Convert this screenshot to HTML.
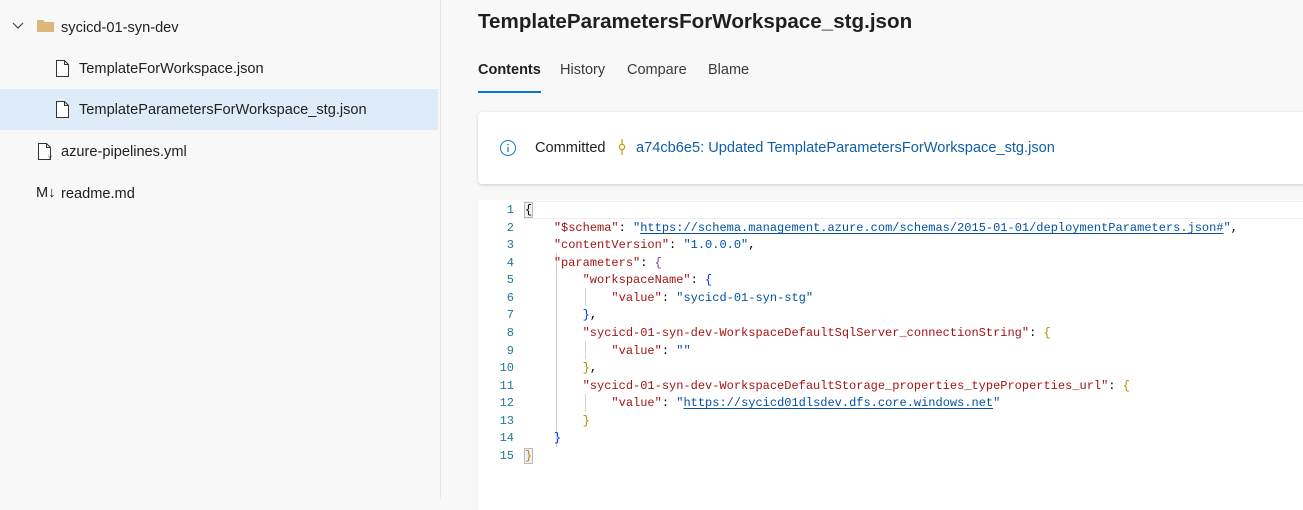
<!DOCTYPE html>
<html><head><meta charset="utf-8"><style>
*{margin:0;padding:0;box-sizing:border-box}
body{width:1303px;height:499px;overflow:hidden;background:#f8f8f8;font-family:"Liberation Sans",sans-serif;color:#201f1e;position:relative}
.side{position:absolute;left:0;top:0;width:441px;height:499px;border-right:1px solid #e6e6e6;background:#f8f8f8}
.row{position:absolute;left:0;width:438px;height:41px;font-size:14.6px;display:flex;align-items:center}
.sel{background:#deecf9}
.t{position:absolute;font-size:14.6px}
.title{position:absolute;left:478px;top:10px;font-size:20.6px;font-weight:600;color:#201f1e}
.tab{position:absolute;top:62px;font-size:14.5px;color:#3b3a39}
.card{position:absolute;left:478px;top:112px;width:840px;height:72px;background:#fff;border-radius:4px;box-shadow:0 1px 3px rgba(0,0,0,.18)}
.code{position:absolute;left:478px;top:200px;width:840px;height:310px;background:#fff}
.ln{position:absolute;left:0;width:36px;text-align:right;font:12px "Liberation Mono",monospace;color:#237893}
.cl{position:absolute;left:47px;font:12px "Liberation Mono",monospace;white-space:pre;color:#000}
.k{color:#a31515}.s{color:#0451a5}.u{color:#0451a5;text-decoration:underline;text-underline-offset:2px}
.b1{color:#af8c00}.b2{color:#7a3e9d}.b3{color:#0431fa}
.g{position:absolute;width:1px;background:#d3d3d3}
</style></head><body>
<div class="side">
 <div class="row" style="top:7px">
  <svg style="position:absolute;left:12px;top:15px" width="12" height="8"><path d="M1 1l5 5 5-5" fill="none" stroke="#444" stroke-width="1.2"/></svg>
  <svg style="position:absolute;left:37px;top:12px" width="18" height="14"><path d="M0 1h6l2 2h9v10H0z" fill="#dcb67a"/></svg>
  <span class="t" style="left:61px;top:13px">sycicd-01-syn-dev</span></div>
 <div class="row" style="top:48px">
  <svg style="position:absolute;left:55px;top:11px" width="16" height="19"><path d="M1.5 1.5h8l4 4v12h-12z M9.5 1.5v4h4" fill="#fff" stroke="#333" stroke-width="1"/></svg>
  <span class="t" style="left:79px;top:13px">TemplateForWorkspace.json</span></div>
 <div class="row sel" style="top:89px">
  <svg style="position:absolute;left:55px;top:11px" width="16" height="19"><path d="M1.5 1.5h8l4 4v12h-12z M9.5 1.5v4h4" fill="#fff" stroke="#333" stroke-width="1"/></svg>
  <span class="t" style="left:79px;top:13px">TemplateParametersForWorkspace_stg.json</span></div>
 <div class="row" style="top:131px">
  <svg style="position:absolute;left:37px;top:11px" width="18" height="19"><path d="M1.5 1.5h8l4 4v12h-12z M9.5 1.5v4h4" fill="#fff" stroke="#333" stroke-width="1"/><text x="11" y="18" font-size="6" fill="#333">Y</text></svg>
  <span class="t" style="left:61px;top:13px">azure-pipelines.yml</span></div>
 <div class="row" style="top:173px">
  <span class="t" style="left:36px;top:12px">M↓</span>
  <span class="t" style="left:61px;top:13px">readme.md</span></div>
</div>
<div class="title">TemplateParametersForWorkspace_stg.json</div>
<div class="tab" style="left:478px;font-weight:600;color:#201f1e">Contents</div>
<div style="position:absolute;left:478px;top:91px;width:63px;height:2px;background:#0078d4"></div>
<div class="tab" style="left:560px">History</div>
<div class="tab" style="left:627px">Compare</div>
<div class="tab" style="left:708px">Blame</div>
<div class="card">
 <svg style="position:absolute;left:21px;top:27px" width="18" height="18"><circle cx="9" cy="9" r="7.5" fill="none" stroke="#0078d4" stroke-width="1"/><path d="M9 8v5" stroke="#0078d4" stroke-width="1.2"/><circle cx="9" cy="5.5" r=".8" fill="#0078d4"/></svg>
 <span style="position:absolute;left:57px;top:28px;font-size:14.6px">Committed</span>
 <svg style="position:absolute;left:140px;top:27px" width="8" height="16"><path d="M4 0v5M4 11v5" stroke="#c19c00" stroke-width="1.2"/><circle cx="4" cy="8" r="2.6" fill="none" stroke="#c19c00" stroke-width="1.2"/></svg>
 <span style="position:absolute;left:158px;top:28px;font-size:14.6px;color:#0f5fa6">a74cb6e5: Updated TemplateParametersForWorkspace_stg.json</span>
</div>
<div class="code">
 <div style="position:absolute;left:44px;top:1px;width:800px;height:18px;border-top:1px solid #eee;border-bottom:1px solid #eee"></div>
 <div class="g" style="left:78px;top:53px;height:194px"></div>
 <div class="g" style="left:107px;top:88px;height:18px"></div>
 <div class="g" style="left:107px;top:141px;height:18px"></div>
 <div class="g" style="left:107px;top:194px;height:18px"></div>
 <div class="ln" style="top:3px">1</div><div class="ln" style="top:21px">2</div><div class="ln" style="top:38px">3</div><div class="ln" style="top:56px">4</div><div class="ln" style="top:73px">5</div><div class="ln" style="top:91px">6</div><div class="ln" style="top:108px">7</div><div class="ln" style="top:126px">8</div><div class="ln" style="top:144px">9</div><div class="ln" style="top:161px">10</div><div class="ln" style="top:179px">11</div><div class="ln" style="top:196px">12</div><div class="ln" style="top:214px">13</div><div class="ln" style="top:231px">14</div><div class="ln" style="top:249px">15</div>
 <div class="cl" style="top:3px"><span style="outline:1px solid #bbb;background:#f0f0f0">{</span></div>
 <div class="cl" style="top:21px">    <span class="k">"$schema"</span>: <span class="s">"</span><span class="u">https://schema.management.azure.com/schemas/2015-01-01/deploymentParameters.json#</span><span class="s">"</span>,</div>
 <div class="cl" style="top:38px">    <span class="k">"contentVersion"</span>: <span class="s">"1.0.0.0"</span>,</div>
 <div class="cl" style="top:56px">    <span class="k">"parameters"</span>: <span class="b2">{</span></div>
 <div class="cl" style="top:73px">        <span class="k">"workspaceName"</span>: <span class="b3">{</span></div>
 <div class="cl" style="top:91px">            <span class="k">"value"</span>: <span class="s">"sycicd-01-syn-stg"</span></div>
 <div class="cl" style="top:108px">        <span class="b3">}</span>,</div>
 <div class="cl" style="top:126px">        <span class="k">"sycicd-01-syn-dev-WorkspaceDefaultSqlServer_connectionString"</span>: <span class="b1">{</span></div>
 <div class="cl" style="top:144px">            <span class="k">"value"</span>: <span class="s">""</span></div>
 <div class="cl" style="top:161px">        <span class="b1">}</span>,</div>
 <div class="cl" style="top:179px">        <span class="k">"sycicd-01-syn-dev-WorkspaceDefaultStorage_properties_typeProperties_url"</span>: <span class="b1">{</span></div>
 <div class="cl" style="top:196px">            <span class="k">"value"</span>: <span class="s">"</span><span class="u">https://sycicd01dlsdev.dfs.core.windows.net</span><span class="s">"</span></div>
 <div class="cl" style="top:214px">        <span class="b1">}</span></div>
 <div class="cl" style="top:231px">    <span class="b3">}</span></div>
 <div class="cl" style="top:249px"><span style="outline:1px solid #bbb;background:#f0f0f0;color:#af8c00">}</span></div>
</div>
</body></html>
